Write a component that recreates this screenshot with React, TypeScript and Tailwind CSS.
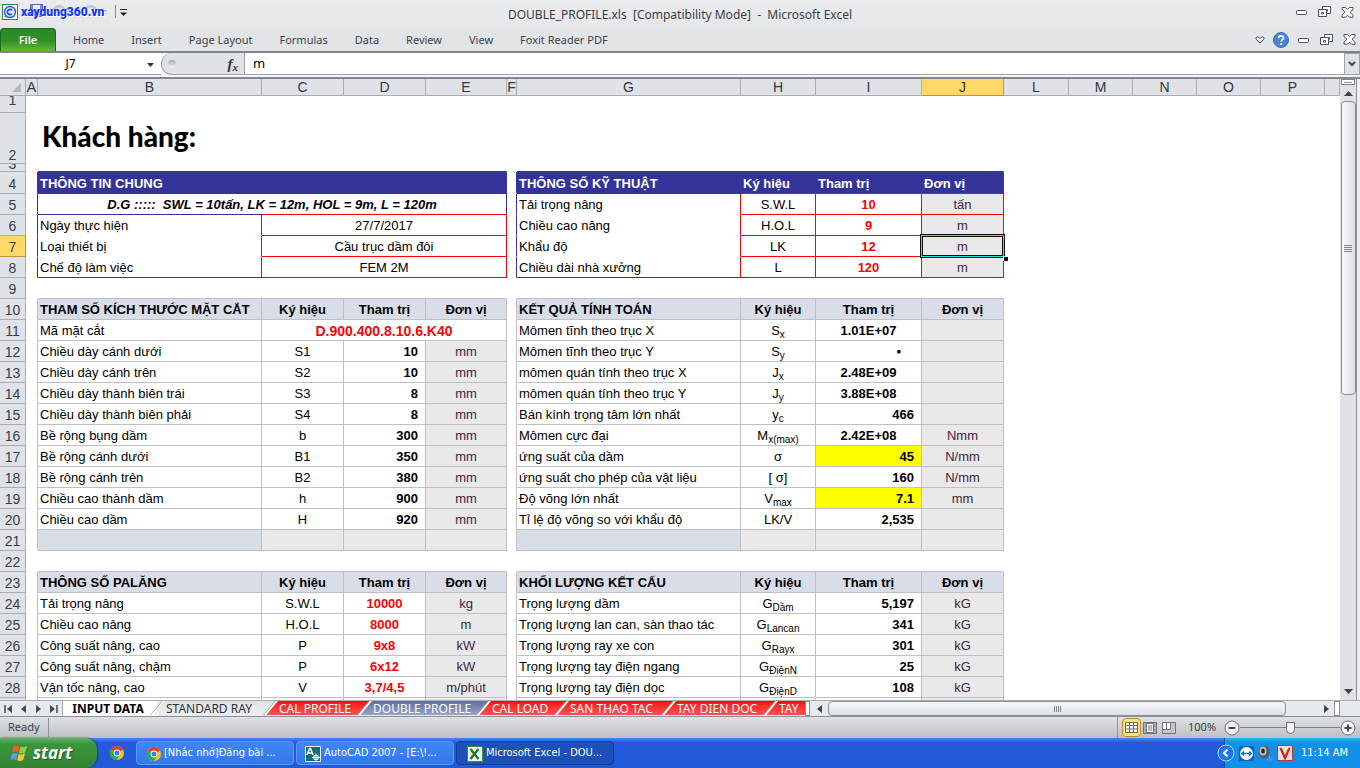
import React from 'react';
import clsx from 'clsx';

type Cell = { t?: React.ReactNode; k: string; span?: number };
type Row = { n: number; h: string; left?: Cell[]; right?: Cell[]; a?: string; f?: string; below?: boolean };

const GRAY = 'border-[#c0c0c0]';
const HEAD = 'bg-[#d9dde8] font-bold border-[#c0c0c0]';
const NAME = 'text-left pl-0.5 border-[#c0c0c0]';
const MID = 'text-center border-[#c0c0c0]';
const UNIT = 'text-center bg-[#e9e9e9] text-[#3f2440] border-[#c0c0c0]';
const NUM = 'text-right pr-[7px] font-bold border-[#c0c0c0]';
const RED = 'text-center font-bold text-[#ff0000] border-[#c0c0c0]';
const YEL = 'text-right pr-[7px] font-bold bg-[#ffff00] border-[#c0c0c0]';
const NAVY = 'bg-[#333399] text-white font-bold text-left pl-0.5 border-r-[#333399]';

const R = 'h-[21px]';
const sym = (a: string, b: string) => (
  <>
    {a}
    <sub className="text-[10px]">{b}</sub>
  </>
);
const head = (title: string): Cell[] => [
  { t: title, k: HEAD + ' text-left pl-0.5' },
  { t: 'Ký hiệu', k: HEAD + ' text-center' },
  { t: 'Tham trị', k: HEAD + ' text-center' },
  { t: 'Đơn vị', k: HEAD + ' text-center' },
];
const line = (name: string, s: React.ReactNode, v: React.ReactNode, unit: string, vk = NUM): Cell[] => [
  { t: name, k: NAME },
  { t: s, k: MID },
  { t: v, k: vk },
  { t: unit, k: UNIT },
];
const spec = (name: string, s: string, v: string, unit: string, last = false): Cell[] => [
  { t: name, k: 'text-left pl-0.5 border-r-[#ff0000] ' + (last ? 'border-b-[#333399]' : 'border-b-white') },
  { t: s, k: 'text-center border-[#ff0000]' },
  { t: v, k: 'text-center font-bold text-[#ff0000] border-[#ff0000]' },
  { t: unit, k: 'text-center bg-[#e9e9e9] text-[#3f2440] border-[#ff0000]' },
];
const info = (name: string, v: string, edge: string): Cell[] => [
  { t: name, k: 'text-left pl-0.5 border-r-[#ff0000] ' + edge },
  { t: v, k: 'text-center border-[#ff0000]', span: 3 },
];
const blank: Cell[] = [{ k: HEAD }, { k: UNIT }, { k: UNIT }, { k: UNIT }];
const blue = 'border-r-[#333399]';
const gray = 'border-r-[#c0c0c0]';

const rows: Row[] = [
  { n: 1, h: 'h-[17px]' },
  { n: 2, h: 'h-[51px]' },
  { n: 3, h: 'h-[8px]' },
  {
    n: 4, h: 'h-[22px]', a: blue, f: blue,
    left: [{ t: 'THÔNG TIN CHUNG', k: NAVY + ' border-b-[#333399]', span: 4 }],
    right: [
      { t: 'THÔNG SỐ KỸ THUẬT', k: NAVY + ' border-b-[#333399]' },
      { t: 'Ký hiệu', k: NAVY + ' border-b-[#ff0000]' },
      { t: 'Tham trị', k: NAVY + ' border-b-[#ff0000]' },
      { t: 'Đơn vị', k: NAVY + ' border-b-[#ff0000]' },
    ],
  },
  {
    n: 5, h: R, a: blue, f: blue,
    left: [
      {
        t: <span className="whitespace-pre">D.G :::::  SWL = 10tấn, LK = 12m, HOL = 9m, L = 120m</span>,
        k: 'text-center font-bold italic border-r-[#333399] border-b-transparent bg-[linear-gradient(to_right,#333399_224px,#ff0000_224px)] bg-origin-border bg-size-[100%_1px] bg-bottom bg-no-repeat',
        span: 4,
      },
    ],
    right: spec('Tải trọng nâng', 'S.W.L', '10', 'tấn'),
  },
  { n: 6, h: R, a: blue, f: blue, left: info('Ngày thực hiện', '27/7/2017', 'border-b-white'), right: spec('Chiều cao nâng', 'H.O.L', '9', 'm') },
  { n: 7, h: R, a: blue, f: blue, left: info('Loại thiết bị', 'Cầu trục dầm đôi', 'border-b-white'), right: spec('Khẩu độ', 'LK', '12', 'm') },
  { n: 8, h: R, a: blue, f: blue, left: info('Chế độ làm việc', 'FEM 2M', 'border-b-[#333399]'), right: spec('Chiều dài nhà xưởng', 'L', '120', 'm', true) },
  { n: 9, h: R, below: true },
  { n: 10, h: R, a: gray, f: gray, left: head('THAM SỐ KÍCH THƯỚC MẶT CẮT'), right: head('KẾT QUẢ TÍNH TOÁN') },
  {
    n: 11, h: R, a: gray, f: gray,
    left: [{ t: 'Mã mặt cắt', k: NAME }, { t: 'D.900.400.8.10.6.K40', k: RED + ' text-[14px]', span: 3 }],
    right: line('Mômen tĩnh theo trục X', sym('S', 'x'), '1.01E+07', '', 'text-center font-bold ' + GRAY),
  },
  { n: 12, h: R, a: gray, f: gray, left: line('Chiều dày cánh dưới', 'S1', '10', 'mm'), right: line('Mômen tĩnh theo trục Y', sym('S', 'y'), '▪', '', 'text-right pr-5 font-bold ' + GRAY) },
  { n: 13, h: R, a: gray, f: gray, left: line('Chiều dày cánh trên', 'S2', '10', 'mm'), right: line('mômen quán tính theo trục X', sym('J', 'x'), '2.48E+09', '', 'text-center font-bold ' + GRAY) },
  { n: 14, h: R, a: gray, f: gray, left: line('Chiều dày thành biên trái', 'S3', '8', 'mm'), right: line('mômen quán tính theo trục Y', sym('J', 'y'), '3.88E+08', '', 'text-center font-bold ' + GRAY) },
  { n: 15, h: R, a: gray, f: gray, left: line('Chiều dày thành biên phải', 'S4', '8', 'mm'), right: line('Bán kính trọng tâm lớn nhất', sym('y', 'c'), '466', '') },
  { n: 16, h: R, a: gray, f: gray, left: line('Bề rộng bụng dầm', 'b', '300', 'mm'), right: line('Mômen cực đại', sym('M', 'x(max)'), '2.42E+08', 'Nmm', 'text-center font-bold ' + GRAY) },
  { n: 17, h: R, a: gray, f: gray, left: line('Bề rộng cánh dưới', 'B1', '350', 'mm'), right: line('ứng suất của dầm', 'σ', '45', 'N/mm', YEL) },
  { n: 18, h: R, a: gray, f: gray, left: line('Bề rộng cánh trên', 'B2', '380', 'mm'), right: line('ứng suất cho phép của vật liệu', '[ σ]', '160', 'N/mm') },
  { n: 19, h: R, a: gray, f: gray, left: line('Chiều cao thành dầm', 'h', '900', 'mm'), right: line('Độ võng lớn nhất', sym('V', 'max'), '7.1', 'mm', YEL) },
  { n: 20, h: R, a: gray, f: gray, left: line('Chiều cao dầm', 'H', '920', 'mm'), right: line('Tỉ lệ độ võng so với khẩu độ', 'LK/V', '2,535', '') },
  { n: 21, h: R, a: gray, f: gray, left: blank, right: blank },
  { n: 22, h: R, below: true },
  { n: 23, h: R, a: gray, f: gray, left: head('THÔNG SỐ PALĂNG'), right: head('KHỐI LƯỢNG KẾT CẤU') },
  { n: 24, h: R, a: gray, f: gray, left: line('Tải trọng nâng', 'S.W.L', '10000', 'kg', RED), right: line('Trọng lượng dầm', sym('G', 'Dầm'), '5,197', 'kG') },
  { n: 25, h: R, a: gray, f: gray, left: line('Chiều cao nâng', 'H.O.L', '8000', 'm', RED), right: line('Trọng lượng lan can, sàn thao tác', sym('G', 'Lancan'), '341', 'kG') },
  { n: 26, h: R, a: gray, f: gray, left: line('Công suất nâng, cao', 'P', '9x8', 'kW', RED), right: line('Trọng lượng ray xe con', sym('G', 'Rayx'), '301', 'kG') },
  { n: 27, h: R, a: gray, f: gray, left: line('Công suất nâng, chậm', 'P', '6x12', 'kW', RED), right: line('Trọng lượng tay điện ngang', sym('G', 'ĐiệnN'), '25', 'kG') },
  { n: 28, h: R, a: gray, f: gray, left: line('Vận tốc nâng, cao', 'V', '3,7/4,5', 'm/phút', RED), right: line('Trọng lượng tay điện dọc', sym('G', 'ĐiệnD'), '108', 'kG') },
];

const columns: [string, string][] = [
  ['A', 'w-[12px]'], ['B', 'w-[224px]'], ['C', 'w-[82px]'], ['D', 'w-[82px]'], ['E', 'w-[81px]'],
  ['F', 'w-[10px]'], ['G', 'w-[224px]'], ['H', 'w-[75px]'], ['I', 'w-[106px]'], ['J', 'w-[82px]'],
  ['L', 'w-[65px]'], ['M', 'w-[64px]'], ['N', 'w-[64px]'], ['O', 'w-[64px]'], ['P', 'w-[64px]'], ['', ''],
];

const td = 'border-r border-b py-0 leading-[18px] whitespace-nowrap';

function Panel({ cells, selected, below }: { cells?: Cell[]; selected?: boolean; below: string }) {
  if (!cells) return <td colSpan={4} className={clsx(td, 'border-r-white', below)} />;
  return (
    <>
      {cells.map((c, i) => (
        <td key={i} colSpan={c.span} className={clsx(td, c.k, selected && i === 3 && 'relative')}>
          <div className="pt-0.5">{c.t}</div>
          {selected && i === 3 && (
            <span className="pointer-events-none absolute -top-0.5 -right-0.5 -bottom-0.5 -left-0.5 z-10 border border-[#101010]">
              <span className="absolute inset-0 border border-[#20e8f0]" />
              <span className="absolute inset-px border border-[#101010]" />
              <span className="absolute -right-1 -bottom-1 size-[5px] border-t border-l border-white bg-black" />
            </span>
          )}
        </td>
      ))}
    </>
  );
}

function Sheet() {
  return (
    <table className="w-full table-fixed border-separate border-spacing-0 text-[13px] text-black">
      <colgroup>
        <col className="w-[26px]" />
        {columns.map(([l, w]) => (
          <col key={l} className={w} />
        ))}
      </colgroup>
      <thead>
        <tr className="h-[17px] bg-[#dfe2e7] text-[14px] text-[#33373d]">
          <th className="border-r border-b border-[#a9adb3] p-0 leading-[16px]">
            <svg className="mr-1 ml-auto block" width="9" height="9" viewBox="0 0 9 9">
              <path d="M9 0v9H0z" fill="#b4b8be" />
            </svg>
          </th>
          {columns.map(([l]) => (
            <th
              key={l}
              scope="col"
              className={clsx('border-r border-b p-0 text-center leading-[16px] font-normal', l === 'J' ? 'border-[#c4923c] bg-[#ffd867]' : 'border-[#a9adb3]')}
            >
              {l}
            </th>
          ))}
        </tr>
      </thead>
      <tbody>
        {rows.map((r) => {
          const below = r.below ? 'border-b-[#c0c0c0]' : r.n === 3 ? 'border-b-[#333399]' : 'border-b-white';
          return (
            <tr key={r.n} className={r.h}>
              <th
                scope="row"
                className={clsx(
                  'border-r border-b p-0 text-center text-[14px] font-normal text-[#3a3e45]',
                  r.n === 7 ? 'border-[#c4923c] bg-[#ffd867]' : 'border-[#a9adb3] bg-[#dfe2e7]',
                  r.n === 1 && 'align-top',
                  r.n === 2 && 'align-bottom',
                )}
              >
                {r.n === 3 ? (
                  <span className="block h-[7px] overflow-hidden leading-[1px]">3</span>
                ) : r.n === 1 ? (
                  <span className="block h-4 overflow-hidden leading-[8px]">1</span>
                ) : (
                  <span className="block pt-0.5 leading-[16px]">{r.n}</span>
                )}
              </th>
              <td className={clsx(td, 'border-b-white', r.a ?? 'border-r-white')} />
              {r.n === 2 ? (
                <td colSpan={4} className="border-r border-b border-white p-0 pl-1 align-top">
                  <h1 className="font-[Lato,sans-serif] text-[28px] leading-[46px] font-black whitespace-nowrap">Khách hàng:</h1>
                </td>
              ) : (
                <Panel cells={r.left} below={below} />
              )}
              <td className={clsx(td, 'border-b-white', r.f ?? 'border-r-white')} />
              <Panel cells={r.right} selected={r.n === 7} below={below} />
              <td colSpan={6} className="p-0" />
            </tr>
          );
        })}
        <tr className="h-[21px]">
          <th className="border-r border-[#a9adb3] bg-[#dfe2e7] p-0" />
          <td className="border-r border-[#c0c0c0]" />
          <td className="border-r border-[#c0c0c0]" />
          <td className="border-r border-[#c0c0c0]" />
          <td className="border-r border-[#c0c0c0]" />
          <td className="border-r border-[#c0c0c0] bg-[#e9e9e9]" />
          <td className="border-r border-[#c0c0c0]" />
          <td className="border-r border-[#c0c0c0]" />
          <td className="border-r border-[#c0c0c0]" />
          <td className="border-r border-[#c0c0c0]" />
          <td className="border-r border-[#c0c0c0] bg-[#e9e9e9]" />
          <td colSpan={6} />
        </tr>
      </tbody>
    </table>
  );
}

function WindowIcons() {
  return (
    <div className="flex items-center gap-2.5">
      <button aria-label="Minimize">
        <svg width="12" height="12" viewBox="0 0 12 12" className="block">
          <rect x=".5" y="4.500" width="10" height="4" rx="1" fill="#fff" stroke="#4b4f5c" />
        </svg>
      </button>
      <button aria-label="Restore">
        <svg width="13" height="12" viewBox="0 0 13 12" className="block" fill="#fff" stroke="#4b4f5c">
          <path d="M4.500.5h8v7h-8z" />
          <path d="M7.500 3.500h2v2" fill="none" />
          <path d="M.5 3.500h8v7h-8z" />
          <path d="M3.500 6.500h2v1.500h-2z" />
        </svg>
      </button>
      <button aria-label="Close">
        <svg width="13" height="11" viewBox="0 0 13 11" className="block">
          <path d="M1 .5h3.500l2 2 2-2H12v2L9 5.250 12 8.200v2H8.500l-2-2-2 2H1v-2l3-2.950L1 2.500z" fill="#fff" stroke="#4b4f5c" strokeLinejoin="round" />
        </svg>
      </button>
    </div>
  );
}

function TitleBar() {
  return (
    <header className="relative flex h-7 shrink-0 items-center bg-linear-to-b from-[#ebecee] to-[#e4e6e9]">
      <svg width="17" height="17" viewBox="0 0 17 17" className="mb-1 ml-0.5">
        <rect x=".5" y=".5" width="15" height="15" fill="#fff" stroke="#2f8a35" />
        <path d="M3 13 10 4M4 4l8 9" stroke="#46a04a" strokeWidth="2" />
        <circle cx="8" cy="8" r="5.500" fill="#dfe8ff" stroke="#2458e8" strokeWidth="1.400" />
        <path d="M10 6.300a2.600 2.600 0 1 0 0 3.400" fill="none" stroke="#1c46d8" strokeWidth="1.600" />
      </svg>
      <div className="relative mb-1 ml-0.5 flex h-6 w-[92px] items-center">
        <svg width="92" height="22" viewBox="0 0 92 22" className="absolute inset-0" fill="none">
          <path d="M9.500 4.500h12v12h-12z" fill="#8084c8" stroke="#6468b4" />
          <path d="M12 5h7v5h-7z" fill="#eef" />
          <path d="M33 10c3-5 10-5 10 1M75 10c-3-5-10-5-10 1" stroke="#c5c8cc" strokeWidth="3" />
          <path d="M80 10h6l-3 3z" fill="#a9adb3" />
        </svg>
        <span className="relative font-[Roboto,sans-serif] text-[12px] leading-4 font-black whitespace-nowrap text-[#1238ff] text-shadow-[1px_1px_0_#fff]">xaydung360.vn</span>
      </div>
      <svg width="14" height="16" viewBox="0 0 14 16" className="mb-1 ml-px">
        <path d="M1.500 1v13" stroke="#8b8f95" />
        <path d="M6 5.500h7" stroke="#222" />
        <path d="M6 8.500h7L9.500 12z" fill="#222" />
      </svg>
      <h2 className="absolute inset-x-0 top-1.5 text-center font-['Noto_Sans',sans-serif] text-[12px] leading-[18px] whitespace-pre text-[#3b3d42]">
        DOUBLE_PROFILE.xls  [Compatibility Mode]  -  Microsoft Excel
      </h2>
      <div className="relative z-10 mr-1.5 ml-auto pb-1">
        <WindowIcons />
      </div>
    </header>
  );
}

const menus = ['Home', 'Insert', 'Page Layout', 'Formulas', 'Data', 'Review', 'View', 'Foxit Reader PDF'];

function Ribbon() {
  return (
    <nav className="flex h-[25px] shrink-0 items-end border-b-2 border-[#7f858c] bg-[#e2e5e8] font-['Noto_Sans',sans-serif] text-[11px] text-[#3f4247]">
      <button className="h-[23px] w-14 rounded-t-sm border border-b-0 border-[#1e6b1c] bg-linear-to-b from-[#2b8a2b] via-[#2c8f26] to-[#62b934] font-semibold text-white">File</button>
      <div className="flex h-[23px] items-center gap-[27px] pt-0.5 pl-[17px]">
        {menus.map((m) => (
          <button key={m} className="whitespace-nowrap">
            {m}
          </button>
        ))}
      </div>
      <div className="mr-1 ml-auto flex h-[23px] items-center gap-2">
        <button aria-label="Minimize the ribbon">
          <svg width="10" height="8" viewBox="0 0 10 8" className="block">
            <path d="M1 1.500 3 .8 5 2.500 7 .8l2 .7v1.700L5 7 1 3.200z" fill="#fff" stroke="#4b4f5c" />
          </svg>
        </button>
        <button aria-label="Help" className="mr-px">
          <svg width="16" height="16" viewBox="0 0 16 16" className="block">
            <circle cx="8" cy="8" r="7.500" fill="#4b84d4" stroke="#3a6cb8" />
            <path d="M5.600 6.200c0-3.200 4.900-3 4.900-.3 0 1.700-2.300 1.700-2.300 3.600" fill="none" stroke="#fff" strokeWidth="1.800" />
            <circle cx="8.200" cy="12" r="1.100" fill="#fff" />
          </svg>
        </button>
        <WindowIcons />
      </div>
    </nav>
  );
}

function FormulaBar() {
  return (
    <div className="flex h-[26px] shrink-0 border-b-2 border-[#83888f] bg-[#f4f6fa] pb-0.5 font-['Noto_Sans',sans-serif] text-[12px]">
      <div className="flex w-[161px] border-b border-[#a0a4aa] bg-white">
        <input aria-label="Name box" defaultValue="J7" className="w-[141px] text-center text-[12px] outline-none" />
        <svg width="7" height="4" viewBox="0 0 7 4" className="mt-2.5 ml-1.5">
          <path d="M0 0h7L3.500 4z" fill="#333" />
        </svg>
      </div>
      <div className="flex w-[84px] items-center justify-between rounded-l-full border border-t-0 border-[#a0a4aa] bg-[#dfe2e7] px-1.5">
        <span className="size-2 rounded-full bg-linear-to-b from-[#a7abb1] to-[#f6f7f8]" />
        <button aria-label="Insert function" className="font-['Liberation_Serif',serif] text-[15px] leading-4 font-bold text-[#333] italic">
          f<sub className="text-[11px]">x</sub>
        </button>
      </div>
      <input aria-label="Formula" defaultValue="m" className="min-w-0 flex-1 border-b border-[#a0a4aa] bg-white pl-2 text-[13px] outline-none" />
      <button aria-label="Expand formula bar" className="flex w-4 items-center justify-center border border-[#a0a4aa] bg-[#dfe2e7]">
        <svg width="8" height="6" viewBox="0 0 8 6">
          <path d="M1 1l3 3 3-3" fill="none" stroke="#444" strokeWidth="2" />
        </svg>
      </button>
    </div>
  );
}

function VerticalScroll() {
  return (
    <div className="flex w-5 shrink-0 border-r-[3px] border-[#eceef1] bg-[#dfe2e7]">
      <div className="flex w-[17px] flex-col items-center border-r border-[#8b9098]">
        <div className="flex h-1.5 w-3.5 items-center justify-center border border-[#7f858c] bg-white">
          <span className="h-px w-2 bg-[#8b9098]" />
        </div>
        <button aria-label="Scroll up" className="flex h-4 items-center">
          <svg width="9" height="5" viewBox="0 0 9 5">
            <path d="M0 5h9L4.500 0z" fill="#444" />
          </svg>
        </button>
        <div className="flex h-[294px] w-[15px] flex-col items-center justify-center gap-px rounded-sm border border-[#8b9098] bg-linear-to-r from-[#f7f8fa] to-[#dcdfe5]">
          {[0, 1, 2, 3].map((i) => (
            <span key={i} className="h-px w-2 bg-[#81868d]" />
          ))}
        </div>
        <button aria-label="Scroll down" className="mt-auto flex h-[18px] items-center">
          <svg width="9" height="5" viewBox="0 0 9 5">
            <path d="M0 0h9L4.500 5z" fill="#444" />
          </svg>
        </button>
      </div>
    </div>
  );
}

const RED_TAB = 'bg-linear-to-b from-[#f80000] to-[#ff5050]';
const tabs = [
  { t: 'STANDARD RAY', w: 'w-[113px]', bg: 'bg-linear-to-b from-[#dfe2e7] to-[#eef0f3]', fg: 'text-[#2f3136]' },
  { t: 'CAL PROFILE', w: 'w-[94px]', bg: RED_TAB, fg: 'text-white' },
  { t: 'DOUBLE PROFILE', w: 'w-[119px]', bg: 'bg-linear-to-b from-[#5d6f9e] to-[#98a5c6]', fg: 'text-white' },
  { t: 'CAL LOAD', w: 'w-[78px]', bg: RED_TAB, fg: 'text-white' },
  { t: 'SAN THAO TAC', w: 'w-[107px]', bg: RED_TAB, fg: 'text-white' },
  { t: 'TAY DIEN DOC', w: 'w-[102px]', bg: RED_TAB, fg: 'text-white' },
  { t: 'TAY', w: 'w-[60px]', bg: RED_TAB, fg: 'text-white' },
];

const navIcons: [string, string][] = [
  ['First sheet', 'M1 0v8M8 0v8L3 4z'],
  ['Previous sheet', 'M7 0v8L2 4z'],
  ['Next sheet', 'M2 0v8l5-4z'],
  ['Last sheet', 'M8 0v8M1 0v8l5-4z'],
];

function SheetTabs() {
  return (
    <div className="flex h-[17px] shrink-0 border-t border-b border-t-[#a9adb3] border-b-[#8b9098] bg-[#e6e9ed] font-['Noto_Sans',sans-serif] text-[12px]">
      <div className="flex w-[63px] shrink-0 items-center gap-1.5 border-r border-[#a9adb3] pl-1">
        {navIcons.map(([l, d]) => (
          <button key={l} aria-label={l}>
            <svg width="9" height="8" viewBox="0 0 9 8" className="block">
              <path d={d} fill="#45484e" />
              {l.endsWith('st sheet') && <path d={d.slice(0, 6)} stroke="#45484e" strokeWidth="1.500" />}
            </svg>
          </button>
        ))}
      </div>
      <div className="flex w-[742px] shrink-0 overflow-hidden">
        <button className="w-[94px] shrink-0 bg-white pr-1 text-center leading-[15px] font-bold whitespace-nowrap text-black">INPUT DATA</button>
        {tabs.map((s) => (
          <button key={s.t} className={clsx('relative shrink-0 pl-[9px] text-left leading-[15px] whitespace-nowrap', s.w, s.fg)}>
            <span className={clsx('absolute inset-x-0 top-0 bottom-px -skew-x-[40deg] border-l-2 border-white shadow-[-1px_0_0_#9aa0a8]', s.bg)} />
            <span className="relative">{s.t}</span>
          </button>
        ))}
      </div>
      <div className="w-[5px] shrink-0 border border-[#8b9098] bg-white" />
      <button aria-label="Scroll left" className="flex w-[18px] shrink-0 items-center justify-center">
        <svg width="5" height="8" viewBox="0 0 5 8">
          <path d="M5 0v8L0 4z" fill="#444" />
        </svg>
      </button>
      <div className="flex min-w-0 flex-1 items-center justify-center gap-px rounded-sm border border-[#8b9098] bg-linear-to-b from-[#f7f8fa] to-[#dcdfe5]">
        {[0, 1, 2, 3].map((i) => (
          <span key={i} className="h-1.5 w-px bg-[#81868d]" />
        ))}
      </div>
      <button aria-label="Scroll right" className="ml-8 flex w-4 items-center justify-center">
        <svg width="5" height="8" viewBox="0 0 5 8">
          <path d="M0 0v8l5-4z" fill="#444" />
        </svg>
      </button>
      <div className="w-[6px] shrink-0 border border-[#8b9098] bg-white" />
      <div className="w-5 shrink-0" />
    </div>
  );
}

function StatusBar() {
  return (
    <footer className="flex h-[21px] shrink-0 items-center bg-linear-to-b from-[#dfe2e5] to-[#bcc0c5] font-['Noto_Sans',sans-serif] text-[11px] text-[#3c3f45]">
      <span className="flex h-[19px] w-[49px] items-center border-r border-[#8f949b] pl-2">Ready</span>
      <div className="ml-auto flex h-full items-center border-l border-[#8f949b] pl-1">
        <button aria-label="Normal view" className="flex size-[19px] items-center justify-center rounded-sm border border-[#c28a30] bg-[#ffe27a]">
          <svg width="13" height="11" viewBox="0 0 13 11" fill="#fff" stroke="#6e6a5c">
            <path d="M.5.5h12v10H.5zM.5 3.500h12M.5 7h12M4.500.5v10M8.500.5v10" />
          </svg>
        </button>
        <button aria-label="Page layout view" className="ml-0.5">
          <svg width="14" height="12" viewBox="0 0 14 12" fill="#fff" stroke="#70747a">
            <path d="M.5.5h13v11H.5z" fill="#a9adb2" />
            <path d="M3.500 1.500h7v9h-7zM5 4h4M5 6h4M5 8h4" />
          </svg>
        </button>
        <button aria-label="Page break preview" className="ml-[5px]">
          <svg width="14" height="12" viewBox="0 0 14 12" fill="#fff" stroke="#70747a">
            <path d="M.5.5h13v11H.5z" fill="#c3c6ca" />
            <path d="M.5.5h4v7h-4zM4.500.5h4v7h-4z" />
          </svg>
        </button>
        <span className="ml-3 w-[36px]">100%</span>
        <button aria-label="Zoom out">
          <svg width="16" height="16" viewBox="0 0 16 16" className="block">
            <circle cx="8" cy="8" r="7" fill="#f4f5f6" stroke="#6b7077" />
            <path d="M4.500 8h7" stroke="#44484e" strokeWidth="2" />
          </svg>
        </button>
        <input
          type="range"
          aria-label="Zoom"
          defaultValue={50}
          className="h-3.5 w-[100px] appearance-none bg-[linear-gradient(#7c8188,#7c8188)] bg-size-[100%_1px] bg-center bg-no-repeat [&::-webkit-slider-thumb]:h-3 [&::-webkit-slider-thumb]:w-[9px] [&::-webkit-slider-thumb]:appearance-none [&::-webkit-slider-thumb]:rounded-b-full [&::-webkit-slider-thumb]:border [&::-webkit-slider-thumb]:border-[#6b7077] [&::-webkit-slider-thumb]:bg-[#f4f5f6]"
        />
        <button aria-label="Zoom in" className="mr-1">
          <svg width="16" height="16" viewBox="0 0 16 16" className="block">
            <circle cx="8" cy="8" r="7" fill="#f4f5f6" stroke="#6b7077" />
            <path d="M4.500 8h7M8 4.500v7" stroke="#44484e" strokeWidth="2" />
          </svg>
        </button>
      </div>
    </footer>
  );
}

function Chrome() {
  return (
    <svg width="14" height="14" viewBox="0 0 14 14" className="shrink-0">
      <circle cx="7" cy="7" r="7" fill="#fbc116" />
      <path d="M7 7 .94 3.500A7 7 0 0 1 13.060 3.500z" fill="#e33b2e" />
      <path d="M.94 3.500A7 7 0 0 0 7 14l3-5.200L7 7z" fill="#2da94f" />
      <circle cx="7" cy="7" r="3.400" fill="#fff" />
      <circle cx="7" cy="7" r="2.500" fill="#3f7fe8" />
    </svg>
  );
}

function Task({ icon, label, active }: { icon: React.ReactNode; label: string; active?: boolean }) {
  return (
    <button
      className={clsx(
        'flex h-[24px] w-[158px] items-center gap-[3px] rounded-sm border pt-px whitespace-nowrap',
        active ? 'border-[#153a8c] bg-[#1d50b8]' : 'border-[#5a9af8] bg-linear-to-b from-[#3f87f4] to-[#3478ea]',
        'pl-2',
      )}
    >
      {icon}
      {label}
    </button>
  );
}

function Taskbar() {
  return (
    <div className="flex h-[30px] shrink-0 items-center bg-linear-to-b from-[#3f8cf0] via-[#245bdb] via-15% to-[#2158d8] font-['DejaVu_Sans_Condensed','DejaVu_Sans',sans-serif] text-[11px] text-white">
      <button className="flex h-full w-[97px] items-center gap-1 rounded-r-xl bg-linear-to-b from-[#5fb75f] via-[#3a963a] via-20% to-[#338433] pl-2.5 font-['Open_Sans',sans-serif] text-[17px] font-bold italic shadow-[1px_0_2px_#12408c] text-shadow-[1px_1px_1px_#1c5c1c]">
        <svg width="19" height="18" viewBox="0 0 19 18">
          <path d="M3.500 2.500C5.500 1 7.500 1.200 9.500 2L8 8.500C6 7.500 4 7.500 2 9z" fill="#f0582a" />
          <path d="M10.500 2.500c2 1 4 .8 6.500-.5l-1.800 6.500c-2 1.200-4 1.300-6.200.5z" fill="#8ad048" />
          <path d="M1.700 10c2-1.500 4-1.300 6-.5L6.200 16c-2-1-4-1-6 .3z" fill="#5a9bf0" />
          <path d="M8.700 10c2 1 4 .8 6.300-.5L13.200 16c-2 1.200-4 1.200-6 .3z" fill="#fcc82c" />
        </svg>
        start
      </button>
      <a href="#chrome" aria-label="Chrome" className="mr-3 ml-[13px]">
        <Chrome />
      </a>
      <div className="flex gap-0.5">
        <Task icon={<span className="ml-0.5"><Chrome /></span>} label="[Nhắc nhở]Đăng bài ..." />
        <Task
          icon={
            <svg width="16" height="16" viewBox="0 0 16 16">
              <path d="M.5.500h15v15H.5z" fill="#0f6f72" stroke="#e8f4f4" />
              <path d="M2 9 4.500 2.500h1L8 9M3 7h4" stroke="#fff" strokeWidth="1.500" fill="none" />
              <path d="M7 11.500h8M11 7.500v8M9 9.500h4v4H9z" stroke="#fff" fill="none" />
            </svg>
          }
          label="AutoCAD 2007 - [E:\!..."
        />
        <Task
          active
          icon={
            <svg width="16" height="16" viewBox="0 0 16 16" className="ml-0.5">
              <path d="M.5.5h15v15H.5z" fill="#eef6ea" stroke="#3c9440" />
              <path d="M3.500 3l8 10M11.500 3l-8 10" stroke="#1f7a2c" strokeWidth="2.400" />
            </svg>
          }
          label="Microsoft Excel - DOU..."
        />
      </div>
      <div className="relative ml-auto flex h-full items-center gap-1 border-l border-[#0c54b0] bg-linear-to-b from-[#28b8f4] via-[#1290e8] via-15% to-[#1290e8] pr-3 pl-2.5">
        <button aria-label="Show hidden icons" className="absolute top-1.5 -left-2">
          <svg width="18" height="18" viewBox="0 0 18 18" className="block">
            <circle cx="9" cy="9" r="8" fill="#1e78e0" stroke="#a8d4ff" />
            <path d="M10.500 5.500 7 9l3.500 3.500" fill="none" stroke="#fff" strokeWidth="2" />
          </svg>
        </button>
        <svg width="15" height="15" viewBox="0 0 15 15" className="ml-1 shrink-0">
          <path d="M0 0h15v15H0z" fill="#0a62c0" />
          <circle cx="7.500" cy="7.500" r="6.500" fill="#fff" />
          <path d="M1.500 7.500 5 4.800v1.900h5V4.800l3.500 2.700-3.500 2.700V8.300H5v1.900z" fill="#0a70d8" />
        </svg>
        <svg width="15" height="16" viewBox="0 0 15 16" className="shrink-0">
          <ellipse cx="6" cy="7" rx="5.500" ry="6.500" fill="#555b63" />
          <ellipse cx="5" cy="6" rx="3.500" ry="4.500" fill="#b8bcc2" />
          <ellipse cx="5" cy="6" rx="1.800" ry="2.500" fill="#23262b" />
          <path d="M9 15c2-1 3-3 3-4M12 15.500c1.500-1 2-2 2-3" stroke="#8c9cf8" fill="none" />
        </svg>
        <svg width="16" height="16" viewBox="0 0 16 16" className="shrink-0">
          <path d="M.5.5h15v15H.5z" fill="#f4dcdc" stroke="#b43c3c" />
          <path d="M3.500 3 8 13l4.500-10" fill="none" stroke="#d42020" strokeWidth="2.200" />
        </svg>
        <time className="ml-1 whitespace-nowrap">11:14 AM</time>
      </div>
    </div>
  );
}

export default function App() {
  return (
    <div className="flex h-screen flex-col overflow-hidden bg-[#dfe2e7] font-['Liberation_Sans',Arial,sans-serif]">
      <TitleBar />
      <Ribbon />
      <FormulaBar />
      <main className="flex min-h-0 flex-1">
        <div className="min-w-0 flex-1 overflow-hidden bg-white">
          <Sheet />
        </div>
        <VerticalScroll />
      </main>
      <SheetTabs />
      <StatusBar />
      <Taskbar />
    </div>
  );
}
